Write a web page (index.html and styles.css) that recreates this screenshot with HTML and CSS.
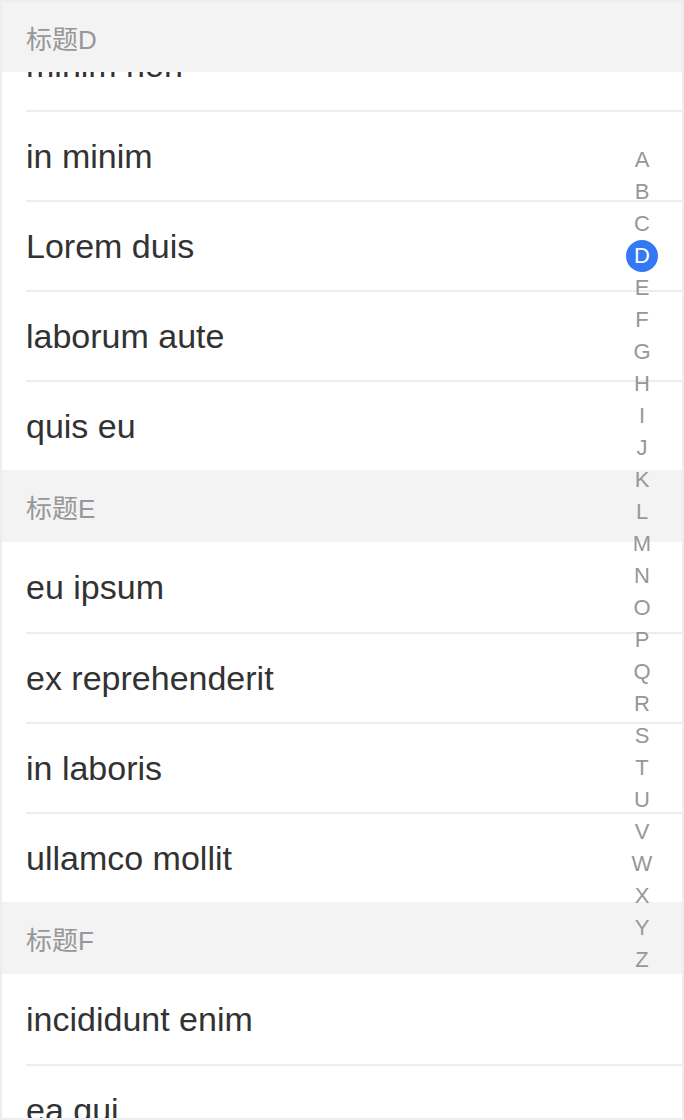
FILE: index.html
```html
<!DOCTYPE html>
<html lang="zh-CN">
<head>
    <meta charset="UTF-8">
    <meta name="viewport" content="width=device-width, initial-scale=1.0">
    <title>IndexBar</title>
    <link rel="stylesheet" href="styles.css">
</head>
<body>
    <div class="page">
        <div class="index-list">
            <div class="group">
                <div class="anchor">标题D</div>
                <div class="cell">minim non</div>
                <div class="cell">in minim</div>
                <div class="cell">Lorem duis</div>
                <div class="cell">laborum aute</div>
                <div class="cell">quis eu</div>
            </div>
            <div class="group">
                <div class="anchor">标题E</div>
                <div class="cell">eu ipsum</div>
                <div class="cell">ex reprehenderit</div>
                <div class="cell">in laboris</div>
                <div class="cell">ullamco mollit</div>
            </div>
            <div class="group">
                <div class="anchor">标题F</div>
                <div class="cell">incididunt enim</div>
                <div class="cell">ea qui</div>
            </div>
        </div>

        <!-- anchor stuck to the top while scrolling -->
        <div class="anchor sticky-anchor">标题D</div>

        <div class="index-bar">
            <span class="index-item">A</span>
            <span class="index-item">B</span>
            <span class="index-item">C</span>
            <span class="index-item active">D</span>
            <span class="index-item">E</span>
            <span class="index-item">F</span>
            <span class="index-item">G</span>
            <span class="index-item">H</span>
            <span class="index-item">I</span>
            <span class="index-item">J</span>
            <span class="index-item">K</span>
            <span class="index-item">L</span>
            <span class="index-item">M</span>
            <span class="index-item">N</span>
            <span class="index-item">O</span>
            <span class="index-item">P</span>
            <span class="index-item">Q</span>
            <span class="index-item">R</span>
            <span class="index-item">S</span>
            <span class="index-item">T</span>
            <span class="index-item">U</span>
            <span class="index-item">V</span>
            <span class="index-item">W</span>
            <span class="index-item">X</span>
            <span class="index-item">Y</span>
            <span class="index-item">Z</span>
        </div>
    </div>
</body>
</html>
```

FILE: styles.css
```css
body {
    margin: 0;
    font-family: "Liberation Sans", "Noto Sans CJK SC", sans-serif;
    background-color: #fff;
}

.page {
    position: relative;
    height: 1120px;
    border: 2px solid #ebedf0;
    box-sizing: border-box;
    overflow: hidden;
    background-color: #fff;
}

/* scrolled so the D anchor sits just above the top edge */
.index-list {
    margin-top: -54px;
}

.anchor {
    height: 72px;
    padding-left: 24px;
    display: flex;
    align-items: center;
    font-size: 26px;
    color: #969799;
    background-color: #f3f3f4;
}

.sticky-anchor {
    position: absolute;
    top: 0;
    left: 0;
    right: 0;
    height: 70px;
}

.cell {
    height: 90px;
    padding-left: 24px;
    display: flex;
    align-items: center;
    font-size: 34px;
    color: #323233;
    box-sizing: border-box;
    position: relative;
}

.cell + .cell {
    padding-top: 2px;
}

.cell + .cell::before {
    content: "";
    position: absolute;
    top: 0;
    left: 24px;
    right: 0;
    height: 2px;
    background-color: #ebedf0;
}

.index-bar {
    position: absolute;
    right: 0;
    top: 50%;
    transform: translateY(-50%);
    display: flex;
    flex-direction: column;
    padding-right: 24px;
}

.index-item {
    width: 32px;
    height: 32px;
    line-height: 32px;
    text-align: center;
    font-size: 22px;
    color: #969799;
}

.index-item.active {
    color: #fff;
    background-color: #3478f6;
    border-radius: 50%;
}
```
